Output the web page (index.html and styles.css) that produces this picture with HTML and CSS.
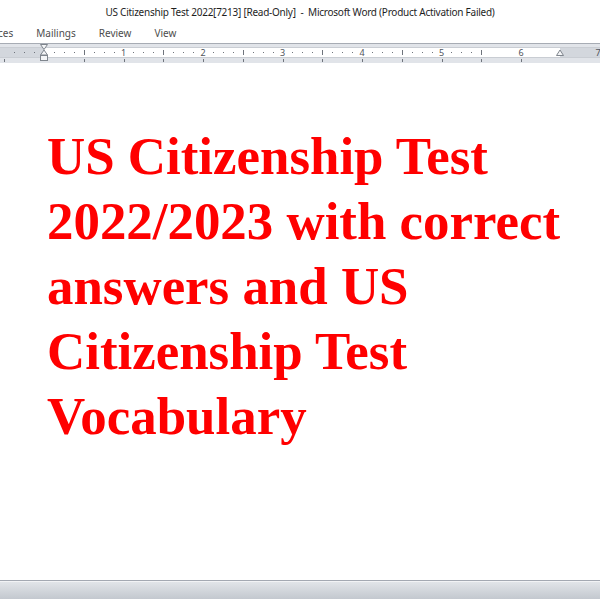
FILE: index.html
```html
<!DOCTYPE html>
<html>
<head>
<meta charset="utf-8">
<link rel="stylesheet" href="styles.css">
</head>
<body>
<div class="window">
  <div class="titlebar">US Citizenship Test 2022[7213] [Read-Only]&nbsp; - &nbsp;Microsoft Word (Product Activation Failed)</div>
  <div class="tabs">
    <span class="tab tab-cut">ces</span>
    <span class="tab">Mailings</span>
    <span class="tab">Review</span>
    <span class="tab">View</span>
  </div>
  <div class="ruler">
    <svg class="ruler-svg" width="600" height="20" viewBox="0 0 600 20">
      <rect x="0" y="0" width="600" height="1" fill="#a7acb4"/>
      <rect x="0" y="1" width="600" height="19" fill="#e1e4e9"/>
      <rect x="0" y="5" width="44" height="9" fill="#d3d7dd"/>
      <rect x="44" y="5" width="516" height="9" fill="#ffffff"/>
      <rect x="560" y="5" width="40" height="9" fill="#d3d7dd"/>
      <rect x="0" y="4" width="600" height="1" fill="#c9cdd3"/>
      <rect x="0" y="14" width="600" height="1" fill="#c9cdd3"/>
      <g id="ticks" fill="#6f747c"></g>
      <g class="nums" font-family="Noto Sans, DejaVu Sans, sans-serif" font-size="9" fill="#4f545b" text-anchor="middle">
        <text x="123.5" y="13">1</text>
        <text x="203" y="13">2</text>
        <text x="282.5" y="13">3</text>
        <text x="362" y="13">4</text>
        <text x="441.5" y="13">5</text>
        <text x="521" y="13">6</text>
        <text x="598" y="13">7</text>
      </g>
      <path d="M40.5 1.5 H47.5 L44 6.5 Z" fill="#f4f5f7" stroke="#7f858d" stroke-width="1"/>
      <path d="M44 7 L47.5 12 H40.5 Z" fill="#f4f5f7" stroke="#7f858d" stroke-width="1"/>
      <rect x="40.5" y="12.5" width="7" height="5" fill="#f4f5f7" stroke="#7f858d" stroke-width="1"/>
      <path d="M560 7 L563.5 12.5 H556.5 Z" fill="#f4f5f7" stroke="#7f858d" stroke-width="1"/>
    </svg>
  </div>
  <div class="page">
    <p class="doc-title">US Citizenship Test 2022/2023 with correct answers and US Citizenship Test Vocabulary</p>
  </div>
  <div class="statusbar"></div>
</div>
<script src="ruler.js"></script>
</body>
</html>
```

FILE: ruler.js
```js
(function () {
  var g = document.getElementById('ticks');
  var ns = 'http://www.w3.org/2000/svg';
  var zero = 44, inch = 79.5, step = inch / 8;
  for (var i = -3; i <= 44; i++) {
    var x = zero + i * step;
    if (x < 0 || x > 600) continue;
    if (i % 8 === 0) continue;
    var r = document.createElementNS(ns, 'rect');
    r.setAttribute('x', Math.round(x));
    r.setAttribute('width', 1);
    if (i % 4 === 0) {
      r.setAttribute('y', 7);
      r.setAttribute('height', 5);
    } else {
      r.setAttribute('y', 9);
      r.setAttribute('height', 1);
    }
    g.appendChild(r);
  }
  for (var j = -1; j <= 14; j++) {
    var xt = zero + j * inch / 2;
    if (xt < 0 || xt > 560 || j === 0) continue;
    var t = document.createElementNS(ns, 'rect');
    t.setAttribute('x', Math.round(xt));
    t.setAttribute('y', 16);
    t.setAttribute('width', 1);
    t.setAttribute('height', 3);
    g.appendChild(t);
  }
})();
```

FILE: styles.css
```css
html, body {
  margin: 0;
  padding: 0;
  background: #ffffff;
}

.window {
  width: 600px;
  height: 600px;
  display: flex;
  flex-direction: column;
  overflow: hidden;
}

.titlebar {
  height: 22px;
  line-height: 24px;
  text-align: center;
  font-family: "Noto Sans", "DejaVu Sans", sans-serif;
  font-size: 10px;
  letter-spacing: -0.25px;
  color: #1e1e1e;
  white-space: nowrap;
}

.tabs {
  height: 21px;
  display: flex;
  align-items: center;
  gap: 23px;
  margin-left: -2px;
  font-family: "Noto Sans", "DejaVu Sans", sans-serif;
  font-size: 10px;
  color: #4d4d4d;
}

.ruler {
  height: 20px;
}

.ruler-svg {
  display: block;
}

.page {
  flex: 1;
  background: #ffffff;
  padding: 61px 20px 0 47px;
}

.doc-title {
  margin: 0;
  font-family: "Liberation Serif", "Times New Roman", serif;
  font-weight: bold;
  font-size: 52.9px;
  line-height: 65px;
  color: #ff0000;
}

.statusbar {
  height: 18px;
  border-top: 1px solid #a4a9b2;
  background: linear-gradient(#e3e6ea, #c3c8cf);
  box-shadow: inset 0 1px 0 #f2f3f5;
  margin-bottom: 1px;
}
```
